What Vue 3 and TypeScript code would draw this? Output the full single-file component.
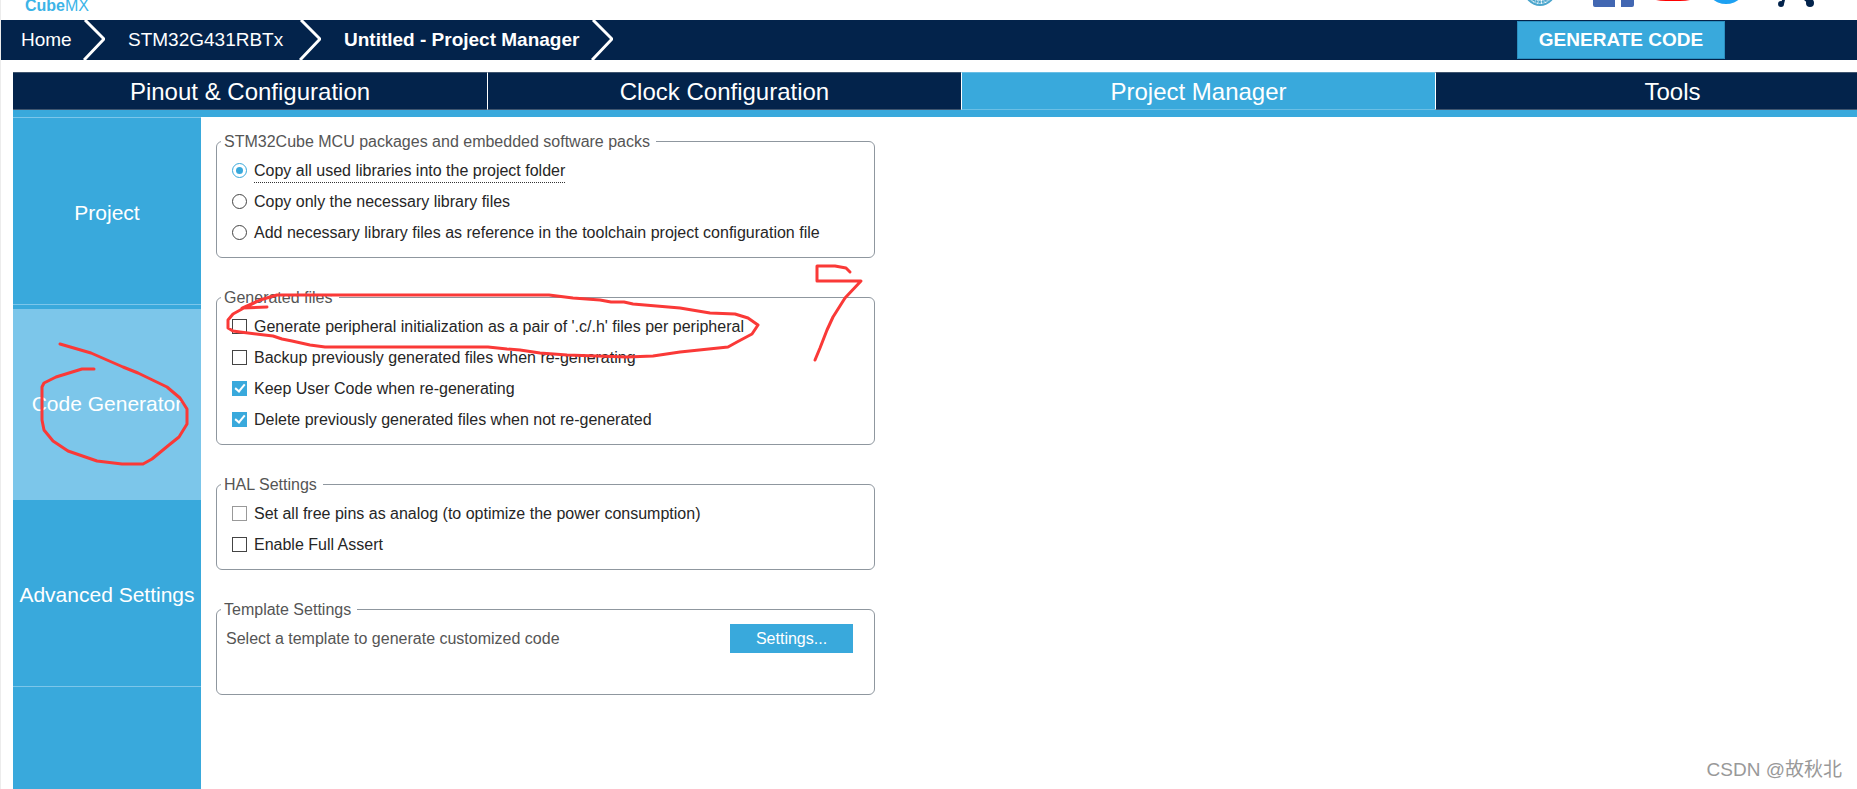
<script setup lang="ts">
import { ref } from 'vue'

interface CheckOption {
  id: string
  label: string
  checked: boolean
  muted?: boolean
}

const crumbs = ['Home', 'STM32G431RBTx', 'Untitled - Project Manager']
const tabs = ['Pinout & Configuration', 'Clock Configuration', 'Project Manager', 'Tools']
const sections = ['Project', 'Code Generator', 'Advanced Settings']
const activeTab = ref('Project Manager')
const activeSection = ref('Code Generator')

const packageOptions = [
  { id: 'all', label: 'Copy all used libraries into the project folder' },
  { id: 'necessary', label: 'Copy only the necessary library files' },
  { id: 'reference', label: 'Add necessary library files as reference in the toolchain project configuration file' },
]
const packageMode = ref('all')

const groups = ref<{ title: string; options: CheckOption[] }[]>([
  {
    title: 'Generated files',
    options: [
      { id: 'pair', label: "Generate peripheral initialization as a pair of '.c/.h' files per peripheral", checked: false },
      { id: 'backup', label: 'Backup previously generated files when re-generating', checked: false },
      { id: 'keep', label: 'Keep User Code when re-generating', checked: true },
      { id: 'delete', label: 'Delete previously generated files when not re-generated', checked: true },
    ],
  },
  {
    title: 'HAL Settings',
    options: [
      { id: 'analog', label: 'Set all free pins as analog (to optimize the power consumption)', checked: false, muted: true },
      { id: 'assert', label: 'Enable Full Assert', checked: false },
    ],
  },
])
</script>

<template>
  <div class="page">
    <header class="brand">
      <div class="logo"><b>Cube</b>MX</div>
      <svg class="social" width="300" height="20" viewBox="0 0 300 20" aria-hidden="true">
        <g fill="none" stroke="#4aa5cc">
          <circle cx="20" cy="-10" r="15" stroke-width="2" />
          <circle cx="20" cy="-10" r="12" stroke-width="2" stroke-dasharray="2 1" />
          <path d="M10 1h20M14 3h12" stroke-dasharray="3 1" />
        </g>
        <path d="M73 0h22v7H75q-2 0-2-2zM101 0h13v5q0 2-2 2h-11z" fill="#4267b2" />
        <path d="M136 0h34q-4 1-10 1h-14q-6 0-10-1z" fill="#f00" />
        <circle cx="206" cy="-17" r="21" fill="#1da1f2" />
        <g fill="#03234b">
          <circle cx="261" cy="4" r="3" />
          <path d="M262 0h3l-1 4h-3z" />
          <circle cx="290" cy="3" r="4" />
          <path d="M284 0h6v5z" />
        </g>
      </svg>
    </header>

    <nav class="topbar" aria-label="Breadcrumb">
      <ol class="crumbs">
        <li v-for="(crumb, i) in crumbs" :key="crumb">
          <a href="#" :class="{ current: i === crumbs.length - 1 }">{{ crumb }}</a>
          <svg width="22" height="40" viewBox="0 0 22 40" aria-hidden="true">
            <path d="M2 0 21 19 1 40" fill="none" stroke="#fff" stroke-width="3" />
          </svg>
        </li>
      </ol>
      <button type="button" class="generate">GENERATE CODE</button>
    </nav>

    <div class="workspace">
      <div class="tabs">
        <button
          v-for="tab in tabs"
          :key="tab"
          type="button"
          :class="{ active: tab === activeTab }"
          @click="activeTab = tab"
        >{{ tab }}</button>
      </div>

      <div class="body">
        <aside class="sidebar">
          <button
            v-for="section in sections"
            :key="section"
            type="button"
            :class="{ active: section === activeSection }"
            @click="activeSection = section"
          >{{ section }}</button>
        </aside>

        <main class="settings">
          <fieldset>
            <legend>STM32Cube MCU packages and embedded software packs</legend>
            <label v-for="option in packageOptions" :key="option.id" class="row">
              <input v-model="packageMode" type="radio" name="packages" :value="option.id" />
              <span :class="{ focused: option.id === packageMode }">{{ option.label }}</span>
            </label>
          </fieldset>

          <fieldset v-for="group in groups" :key="group.title">
            <legend>{{ group.title }}</legend>
            <label v-for="option in group.options" :key="option.id" class="row">
              <input v-model="option.checked" type="checkbox" :class="{ muted: option.muted }" />
              <span>{{ option.label }}</span>
            </label>
          </fieldset>

          <fieldset>
            <legend>Template Settings</legend>
            <div class="template">
              <span>Select a template to generate customized code</span>
              <button type="button">Settings...</button>
            </div>
          </fieldset>
        </main>
      </div>
    </div>

    <svg class="marks" width="900" height="500" viewBox="0 0 900 500" aria-hidden="true">
      <path d="M60 344 91 353 123 367 138 373 167 387 180 398 187 409V424L179 437 169 445 152 459 143 464H122L97 461 68 451 53 441 44 430 42 420V387L44 383 56 377 82 369H94" />
      <path d="M267 307 242 308 260 300 277 295H549L573 298 600 300 611 302H624L633 304 680 308 710 313 735 314 748 318 758 325 752 334 737 342 728 347 680 352 653 356 627 357 567 355 540 353 520 350 507 349 488 347H325L310 345 292 341 282 339 273 336 240 332 233 331 228 328V320L233 314 242 309 260 300" />
      <path d="M850 272 846 268 835 266H817V281H861L845 298 833 317 827 330 820 348 815 360" />
    </svg>
    <div class="watermark">CSDN @故秋北</div>
  </div>
</template>

<style>
body {
  margin: 0;
  background: #fff;
}
</style>

<style scoped>
.page {
  position: relative;
  display: flex;
  flex-direction: column;
  box-sizing: border-box;
  min-height: 100vh;
  overflow: hidden;
  border-left: 1px solid #ececec;
  font-family: "Liberation Sans", Arial, "Noto Sans CJK SC", sans-serif;
  font-size: 16px;
}
button {
  margin: 0;
  padding: 0;
  border: 0;
  border-radius: 0;
  font-family: inherit;
  color: #fff;
  background: #39a9dc;
  cursor: pointer;
}
.brand {
  display: flex;
  justify-content: space-between;
  align-items: flex-end;
  height: 20px;
  padding: 0 37px 0 24px;
  overflow: hidden;
}
.logo {
  font-size: 16px;
  line-height: 28px;
  color: #3cb4e7;
}
.topbar {
  display: flex;
  align-items: center;
  justify-content: space-between;
  height: 40px;
  padding-right: 132px;
  background: #03234b;
}
.crumbs {
  display: grid;
  grid-template-columns: 104px 216px 292px;
  margin: 0;
  padding: 0;
  list-style: none;
  font-size: 19px;
}
.crumbs li {
  display: flex;
  align-items: center;
  justify-content: space-between;
  padding-left: 20px;
}
.crumbs li + li {
  padding-left: 23px;
}
.crumbs a {
  color: #fff;
  text-decoration: none;
  white-space: nowrap;
}
.crumbs a.current {
  font-weight: bold;
}
.generate {
  width: 208px;
  height: 38px;
  border: 1px solid #2b8fc0;
  font-size: 19px;
  font-weight: bold;
}
.workspace {
  display: flex;
  flex: 1;
  flex-direction: column;
  margin: 12px 0 0 12px;
}
.tabs {
  display: grid;
  grid-template-columns: repeat(4, 1fr);
  width: calc(100% + 52px);
  border-bottom: 7px solid #39a9dc;
}
.tabs button {
  height: 38px;
  padding-top: 2px;
  border: solid #3f556f;
  border-width: 1px 0;
  font-size: 24px;
  background: #03234b;
}
.tabs button.active {
  border-top-color: #6bbfe5;
  border-bottom-color: #6bbfe5;
  background: #39a9dc;
}
.tabs button + button {
  border-left: 1px solid #fff;
}
.body {
  display: flex;
  flex: 1;
}
.sidebar {
  display: flex;
  flex-direction: column;
  width: 188px;
  border-top: 1px solid #7cc6ea;
  box-sizing: border-box;
  background: #39a9dc;
}
.sidebar button {
  height: 191px;
  padding-bottom: 2px;
  font-size: 21px;
  box-shadow: inset 0 -4px #39a9dc, inset 0 -5px #7cc6ea;
}
.sidebar button.active {
  background: #7cc6ea;
  box-shadow: none;
}
.settings {
  display: flex;
  flex: 1;
  flex-direction: column;
  gap: 29px;
  max-width: 659px;
  padding: 14px 15px 24px;
}
fieldset {
  min-width: 0;
  margin: 0;
  padding: 3px 21px 9px 4px;
  border: 1px solid #8f979f;
  border-radius: 6px;
}
legend {
  padding: 0 6px 0 3px;
  line-height: 21px;
  color: #555;
}
.row {
  display: flex;
  align-items: center;
  gap: 7px;
  height: 31px;
  padding-left: 11px;
  color: #262626;
  white-space: nowrap;
}
.row span {
  line-height: 23px;
  border-bottom: 1px solid transparent;
}
.row span.focused {
  border-bottom: 1px dotted #333;
}
input {
  position: relative;
  flex: none;
  appearance: none;
  box-sizing: border-box;
  width: 15px;
  height: 15px;
  margin: 0;
  border: 1px solid #444;
  background: #fff;
}
input.muted {
  border-color: #999;
}
input[type="radio"] {
  border-radius: 50%;
}
input:checked {
  border-color: #39a9dc;
}
input[type="radio"]:checked::after {
  content: "";
  position: absolute;
  inset: 3px;
  border-radius: 50%;
  background: #39a9dc;
}
input[type="checkbox"]:checked {
  background: #39a9dc;
}
input[type="checkbox"]:checked::after {
  content: "";
  position: absolute;
  left: 4px;
  top: 0;
  width: 4px;
  height: 8px;
  border: solid #fff;
  border-width: 0 2px 2px 0;
  transform: rotate(40deg);
}
.template {
  display: flex;
  align-items: flex-start;
  justify-content: space-between;
  min-height: 62px;
  padding-left: 5px;
  line-height: 31px;
  color: #555;
}
.template button {
  width: 123px;
  height: 29px;
  margin-top: 1px;
  font-size: 16px;
}
.marks {
  position: absolute;
  top: 0;
  left: -1px;
  fill: none;
  stroke: #fa3937;
  stroke-width: 3;
  stroke-linecap: round;
  stroke-linejoin: round;
  pointer-events: none;
}
.watermark {
  position: absolute;
  right: 15px;
  bottom: 6px;
  font-size: 19px;
  line-height: 26px;
  color: #999;
}
</style>
